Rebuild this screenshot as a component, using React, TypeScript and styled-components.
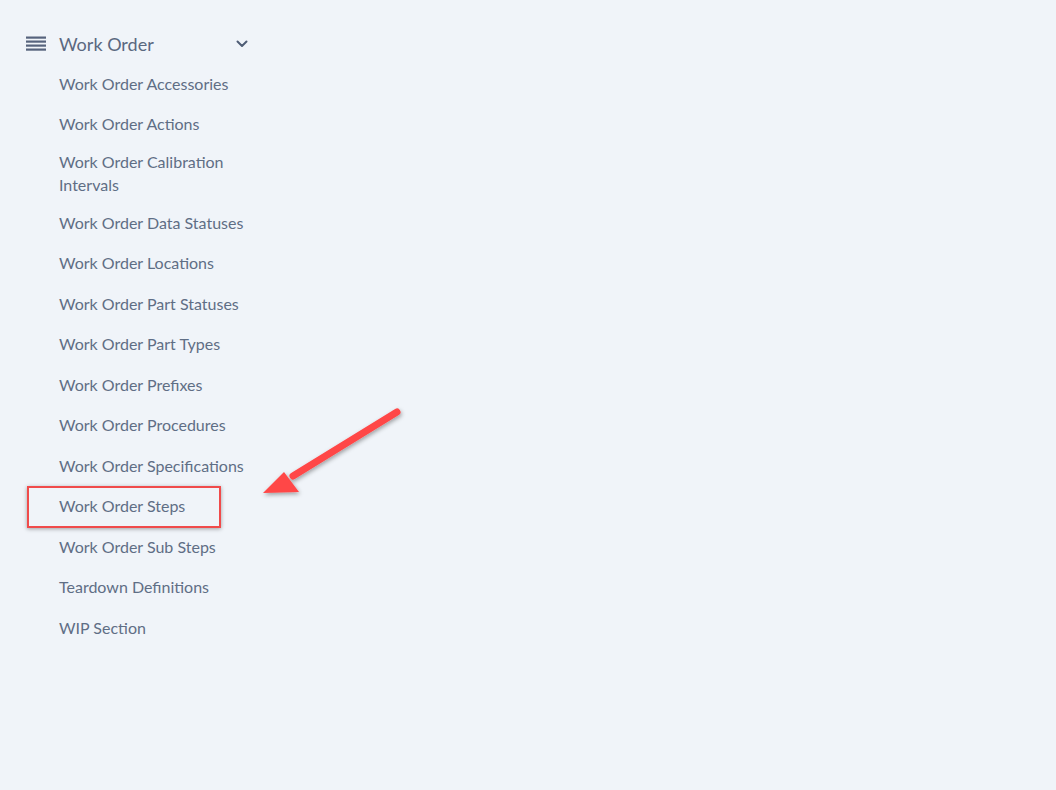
import React from "react";
import styled, { createGlobalStyle } from "styled-components";

const GlobalStyle = createGlobalStyle`
  html, body {
    margin: 0;
    padding: 0;
    background: #f0f4f9;
  }
  body {
    font-family: Lato, "Noto Sans", "Liberation Sans", sans-serif;
    color: #5e6d84;
  }
`;

const Page = styled.div`
  position: relative;
  width: 1056px;
  height: 790px;
  background: #f0f4f9;
  overflow: hidden;
`;

const Sidebar = styled.nav`
  width: 222px;
  padding: 30px 0 0 26px;
  display: flex;
  flex-direction: column;
`;

const GroupHeader = styled.div`
  display: flex;
  align-items: center;
  height: 28px;
  margin-bottom: 5px;
  cursor: pointer;
`;

const GroupIcon = styled.span`
  width: 20px;
  height: 16px;
  display: flex;
  margin-right: 13px;
  color: #56637d;
`;

const GroupTitle = styled.span`
  flex: 1;
  font-size: 18px;
  color: #5a6880;
`;

const Chevron = styled.span`
  display: flex;
  color: #4f5d76;
`;

const ItemList = styled.ul`
  list-style: none;
  margin: 0;
  padding: 0 0 0 33px;
  display: flex;
  flex-direction: column;
`;

const Item = styled.li<{ $marked?: boolean }>`
  position: relative;
  min-height: 40.5px;
  padding: 6px 0;
  box-sizing: border-box;
  display: flex;
  align-items: center;
  font-size: 16px;
  line-height: 23px;
  color: #5f6e85;

  ${(p) =>
    p.$marked &&
    `
    &::after {
      content: "";
      position: absolute;
      left: -32px;
      top: 0px;
      width: 190px;
      height: 38px;
      border: 2px solid #f04b4b;
      box-shadow: 0 1px 4px rgba(0, 0, 0, 0.35);
    }
  `}
`;

const Pointer = styled.svg`
  position: absolute;
  left: 253px;
  top: 400px;
  overflow: visible;
`;

const items = [
  "Work Order Accessories",
  "Work Order Actions",
  "Work Order Calibration Intervals",
  "Work Order Data Statuses",
  "Work Order Locations",
  "Work Order Part Statuses",
  "Work Order Part Types",
  "Work Order Prefixes",
  "Work Order Procedures",
  "Work Order Specifications",
  "Work Order Steps",
  "Work Order Sub Steps",
  "Teardown Definitions",
  "WIP Section",
];

export default function App() {
  return (
    <Page>
      <GlobalStyle />
      <Sidebar>
        <GroupHeader>
          <GroupIcon>
            <svg width="20" height="16" viewBox="0 0 20 16">
              <g fill="currentColor">
                <rect x="0" y="0.5" width="20" height="2.2" />
                <rect x="0" y="4.5" width="20" height="2.2" />
                <rect x="0" y="8.5" width="20" height="2.2" />
                <rect x="0" y="12.5" width="20" height="2.2" />
              </g>
            </svg>
          </GroupIcon>
          <GroupTitle>Work Order</GroupTitle>
          <Chevron>
            <svg width="12" height="8" viewBox="0 0 12 8">
              <path
                d="M1.5 1.5 L6 6 L10.5 1.5"
                fill="none"
                stroke="currentColor"
                strokeWidth="2"
                strokeLinecap="round"
                strokeLinejoin="round"
              />
            </svg>
          </Chevron>
        </GroupHeader>
        <ItemList>
          {items.map((label) => (
            <Item key={label} $marked={label === "Work Order Steps"}>
              {label}
            </Item>
          ))}
        </ItemList>
      </Sidebar>
      <Pointer width="150" height="100" viewBox="0 0 150 100">
        <defs>
          <filter id="sh" x="-20%" y="-20%" width="140%" height="140%">
            <feDropShadow dx="1" dy="2" stdDeviation="2" floodColor="#000" floodOpacity="0.35" />
          </filter>
        </defs>
        <g filter="url(#sh)">
          <line x1="144" y1="12" x2="40" y2="76" stroke="#ff4646" strokeWidth="7" strokeLinecap="round" />
          <polygon points="10,93 31,72 46,92" fill="#ff4646" />
        </g>
      </Pointer>
    </Page>
  );
}
